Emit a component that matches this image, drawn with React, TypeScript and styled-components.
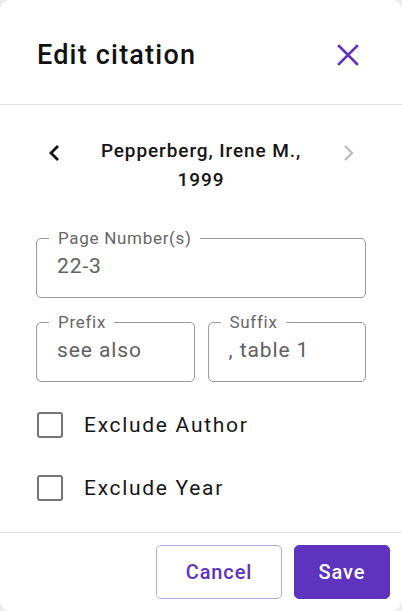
import React from "react"
import styled, { createGlobalStyle } from "styled-components"

const purple = "#5e33be"

const GlobalStyle = createGlobalStyle`
  html, body {
    margin: 0;
    padding: 0;
    background: #ededed;
  }
  body {
    font-family: Roboto, "Noto Sans", Arial, sans-serif;
  }
  * { box-sizing: border-box; }
`

const Card = styled.div`
  width: 402px;
  height: 611px;
  background: #fff;
  border-radius: 11px;
  display: flex;
  flex-direction: column;
  overflow: hidden;
`

const Header = styled.div`
  height: 105px;
  flex-shrink: 0;
  display: flex;
  align-items: center;
  justify-content: space-between;
  padding: 6px 43px 0 37px;
  border-bottom: 1px solid #e0e0e0;
`

const Title = styled.h2`
  margin: 0;
  font-size: 27px;
  font-weight: 500;
  color: #111;
  letter-spacing: 1.2px;
`

const IconButton = styled.button`
  border: 0;
  background: none;
  padding: 0;
  display: flex;
  cursor: pointer;
`

const Body = styled.div`
  flex: 1;
  padding: 31px 36px 0 36px;
  display: flex;
  flex-direction: column;
`

const Nav = styled.div`
  display: grid;
  grid-template-columns: 40px 1fr 40px;
  align-items: start;
`

const NavTitle = styled.div`
  text-align: center;
  font-size: 19px;
  font-weight: 500;
  line-height: 29px;
  color: #151515;
  letter-spacing: 0.9px;
  padding: 0 10px;
`

const Chevron = styled.div<{ $side: "left" | "right" }>`
  display: flex;
  justify-content: ${p => (p.$side === "left" ? "flex-start" : "flex-end")};
  padding: 8px ${p => (p.$side === "right" ? "11px" : "0")} 0 ${p => (p.$side === "left" ? "11px" : "0")};
`

const Fields = styled.div`
  margin-top: 36px;
  display: grid;
  grid-template-columns: 1fr 1fr;
  column-gap: 13px;
  row-gap: 16px;
`

const Outline = styled.fieldset<{ $wide?: boolean }>`
  grid-column: ${p => (p.$wide ? "1 / span 2" : "auto")};
  margin: 0;
  height: 68px;
  border: 1px solid #9a9a9a;
  border-radius: 5px;
  padding: 0 20px;
`

const Legend = styled.legend`
  padding: 0 8px 0 9px;
  margin-left: -8px;
  font-size: 17px;
  line-height: 16px;
  color: #666;
  letter-spacing: 0.7px;
`

const Value = styled.div`
  font-size: 21px;
  color: #616161;
  letter-spacing: 0.9px;
  padding-top: 8px;
`

const Checks = styled.div`
  margin-top: 11px;
  display: flex;
  flex-direction: column;
`

const CheckRow = styled.label`
  height: 63px;
  display: flex;
  align-items: center;
  gap: 21px;
  padding-left: 1px;
  font-size: 21px;
  color: #161616;
  letter-spacing: 1.7px;
`

const Box = styled.span`
  width: 26px;
  height: 26px;
  border: 2.5px solid #767676;
  border-radius: 3px;
  flex-shrink: 0;
`

const Footer = styled.div`
  margin-top: auto;
  border-top: 1px solid #e0e0e0;
  padding: 12px 12px 12px 0;
  display: flex;
  justify-content: flex-end;
  gap: 12px;
`

const Button = styled.button<{ $primary?: boolean }>`
  height: 54px;
  width: ${p => (p.$primary ? "96px" : "126px")};
  border-radius: 5px;
  font-family: inherit;
  font-size: 20px;
  font-weight: 500;
  letter-spacing: 0.9px;
  cursor: pointer;
  border: 1px solid ${p => (p.$primary ? purple : "#b9a6e6")};
  background: ${p => (p.$primary ? purple : "#fff")};
  color: ${p => (p.$primary ? "#fff" : purple)};
`

export default function App() {
  return (
    <>
      <GlobalStyle />
      <Card>
        <Header>
          <Title>Edit citation</Title>
          <IconButton aria-label="Close">
            <svg width="22" height="22" viewBox="0 0 22 22">
              <path d="M2 2 L20 20 M20 2 L2 20" stroke={purple} strokeWidth="2.6" strokeLinecap="square" />
            </svg>
          </IconButton>
        </Header>
        <Body>
          <Nav>
            <Chevron $side="left">
              <svg width="14" height="18" viewBox="0 0 14 18">
                <path d="M11 2 L4 9 L11 16" fill="none" stroke="#111" strokeWidth="2.8" />
              </svg>
            </Chevron>
            <NavTitle>Pepperberg, Irene M., 1999</NavTitle>
            <Chevron $side="right">
              <svg width="12" height="18" viewBox="0 0 12 18">
                <path d="M2 2 L9 9 L2 16" fill="none" stroke="#bdbdbd" strokeWidth="2.4" />
              </svg>
            </Chevron>
          </Nav>
          <Fields>
            <Outline $wide>
              <Legend>Page Number(s)</Legend>
              <Value>22-3</Value>
            </Outline>
            <Outline>
              <Legend>Prefix</Legend>
              <Value>see also</Value>
            </Outline>
            <Outline>
              <Legend>Suffix</Legend>
              <Value>, table 1</Value>
            </Outline>
          </Fields>
          <Checks>
            <CheckRow>
              <Box />
              Exclude Author
            </CheckRow>
            <CheckRow>
              <Box />
              Exclude Year
            </CheckRow>
          </Checks>
        </Body>
        <Footer>
          <Button>Cancel</Button>
          <Button $primary>Save</Button>
        </Footer>
      </Card>
    </>
  )
}
